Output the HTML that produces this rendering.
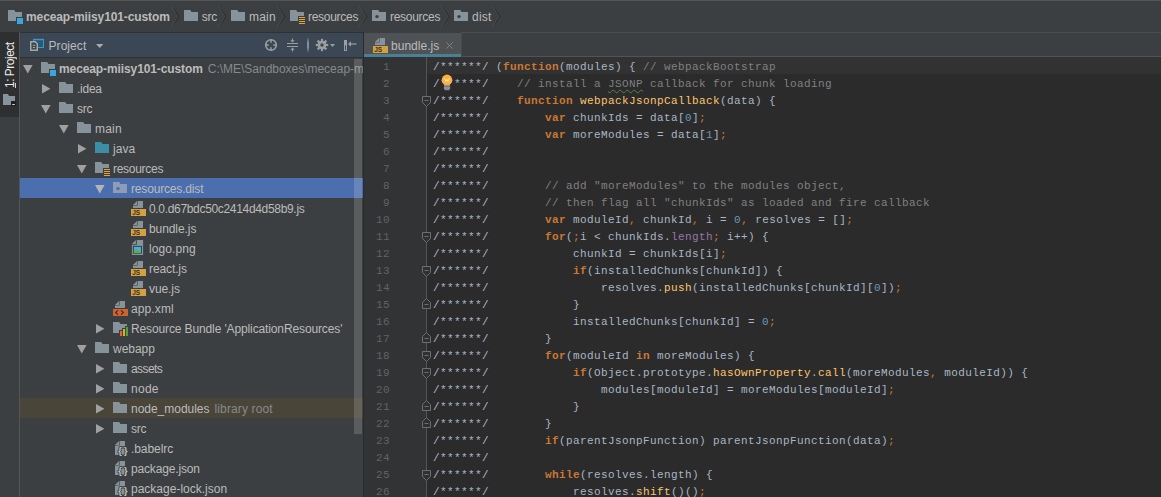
<!DOCTYPE html>
<html><head><meta charset="utf-8"><title>bundle.js</title>
<style>
*{box-sizing:border-box}
html,body{margin:0;padding:0}
body{width:1161px;height:497px;overflow:hidden;background:#3c3f41;position:relative;font-family:"Liberation Sans",sans-serif;font-size:12px;color:#bbbbbb}
.abs{position:absolute}
.ic{display:block}
.b{font-weight:bold}
#topline{left:0;top:0;width:1161px;height:1px;background:#555555}
#crumbs{left:0;top:1px;width:1161px;height:31px;background:#3c3f41;white-space:nowrap}
#crumbs .ct{top:1px;height:31px;line-height:31px;font-size:12px;color:#bbbbbb}
#crumbline{left:461px;top:32px;width:700px;height:1px;background:#4c4e50}
#strip{left:0;top:32px;width:20px;height:465px;background:#3c3f41;border-right:1px solid #555555}
#ptab{left:0;top:32px;width:19px;height:85px;background:#2d2f30}
#ptabtx{left:1px;top:40px;width:19px;height:48px;line-height:19px;writing-mode:vertical-rl;transform:rotate(180deg);font-size:12px;color:#ececec;white-space:nowrap;letter-spacing:-0.5px}
#phead{left:20px;top:32px;width:343px;height:26px;background:#3b4754;border-top:1px solid #2f3234;border-bottom:1px solid #2f3234}
#phead .t{position:absolute;left:28.5px;top:1px;line-height:24px;font-size:12px;color:#bbbbbb;letter-spacing:0.065px}
#tree{left:20px;top:58px;width:343px;height:439px;overflow:hidden;background:#3c3f41}
.row{position:absolute;left:0;width:343px;height:20px;line-height:20px;white-space:nowrap}
.row.sel{background:#4b6eaf}
.row.lib{background:#494539}
.row .icw{position:absolute;top:2px;width:16px;height:16px}
.row .tx{position:absolute;top:1px;font-size:12px;color:#bbbbbb}
.row .ex{color:#878a8c;margin-left:5px;font-weight:normal}
#tthumb{left:354px;top:59px;width:8px;height:375px;background:rgba(255,255,255,0.155)}
#divider{left:363px;top:32px;width:1px;height:465px;background:#2b2b2b}
#tabs{left:364px;top:33px;width:797px;height:24px;background:#3c3f41;border-bottom:1px solid #515355}
#tabsb{left:461px;top:33px;width:1px;height:24px;background:#47494b}
#tab{left:364px;top:33px;width:97px;height:24px;background:#4e5254;border-bottom:3px solid #4a8096}
#tab .t{position:absolute;left:27px;top:1px;line-height:24px;font-size:12px;color:#bbbbbb;letter-spacing:0.030px}
#editor{left:364px;top:57px;width:797px;height:440px;background:#2b2b2b;overflow:hidden}
#gutter{left:0;top:0;width:62px;height:440px;background:#313335}
#gline{left:62px;top:0;width:1px;height:440px;background:#555555}
#caret{left:63px;top:0;width:734px;height:17px;background:#323232}
.num{position:absolute;left:0;width:26px;margin-top:2px;text-align:right;height:17px;line-height:17px;font-family:"Liberation Mono",monospace;font-size:11px;letter-spacing:0.399px;color:#606366}
.ln{position:absolute;left:69px;height:17px;line-height:17px;margin-top:2px;white-space:pre;font-family:"Liberation Mono",monospace;font-size:11px;letter-spacing:0.399px;color:#a9b7c6}
.k{color:#cc7832} .kb{font-weight:bold} .f{color:#ffc66d} .n{color:#6897bb} .c{color:#808080} .p{color:#9876aa}
.ty{text-decoration:underline wavy #5d8048;text-decoration-thickness:1px;text-underline-offset:2px}
.fold{position:absolute;left:58px}
</style></head><body>
<div id="topline" class="abs"></div>
<div id="crumbs" class="abs"><span class="abs" style="left:7px;top:7px"><svg class="ic" width="16" height="16" viewBox="0 0 16 16"><path d="M1 2h6.2l1.3 2H15v5H9v4H1z" fill="#87939a"/><rect x="10" y="10" width="6" height="6" fill="#35a9dc"/></svg></span><span class="abs ct b" style="left:26px;letter-spacing:-0.103px">meceap-miisy101-custom</span><svg class="abs" style="left:170px;top:4px" width="10" height="23" viewBox="0 0 10 23"><defs><linearGradient id="cg7" x1="0" y1="0" x2="0" y2="1"><stop offset="0" stop-color="#2b2d2e" stop-opacity="0.1"/><stop offset="0.3" stop-color="#2b2d2e" stop-opacity="1"/><stop offset="0.7" stop-color="#2b2d2e" stop-opacity="1"/><stop offset="1" stop-color="#2b2d2e" stop-opacity="0.1"/></linearGradient></defs><path d="M1 1L8 11.5L1 22" fill="none" stroke="#55585a" stroke-opacity="0.6" stroke-width="1"/><path d="M2 1L9 11.5L2 22" fill="none" stroke="url(#cg7)" stroke-width="1.1"/></svg><span class="abs" style="left:183px;top:7px"><svg class="ic" width="16" height="16" viewBox="0 0 16 16"><path d="M1 2h6.2l1.3 2H15v9H1z" fill="#87939a"/></svg></span><span class="abs ct" style="left:201.8px;letter-spacing:-0.232px">src</span><svg class="abs" style="left:217px;top:4px" width="10" height="23" viewBox="0 0 10 23"><defs><linearGradient id="cg183" x1="0" y1="0" x2="0" y2="1"><stop offset="0" stop-color="#2b2d2e" stop-opacity="0.1"/><stop offset="0.3" stop-color="#2b2d2e" stop-opacity="1"/><stop offset="0.7" stop-color="#2b2d2e" stop-opacity="1"/><stop offset="1" stop-color="#2b2d2e" stop-opacity="0.1"/></linearGradient></defs><path d="M1 1L8 11.5L1 22" fill="none" stroke="#55585a" stroke-opacity="0.6" stroke-width="1"/><path d="M2 1L9 11.5L2 22" fill="none" stroke="url(#cg183)" stroke-width="1.1"/></svg><span class="abs" style="left:230px;top:7px"><svg class="ic" width="16" height="16" viewBox="0 0 16 16"><path d="M1 2h6.2l1.3 2H15v9H1z" fill="#87939a"/></svg></span><span class="abs ct" style="left:249px;letter-spacing:0.198px">main</span><svg class="abs" style="left:276px;top:4px" width="10" height="23" viewBox="0 0 10 23"><defs><linearGradient id="cg230" x1="0" y1="0" x2="0" y2="1"><stop offset="0" stop-color="#2b2d2e" stop-opacity="0.1"/><stop offset="0.3" stop-color="#2b2d2e" stop-opacity="1"/><stop offset="0.7" stop-color="#2b2d2e" stop-opacity="1"/><stop offset="1" stop-color="#2b2d2e" stop-opacity="0.1"/></linearGradient></defs><path d="M1 1L8 11.5L1 22" fill="none" stroke="#55585a" stroke-opacity="0.6" stroke-width="1"/><path d="M2 1L9 11.5L2 22" fill="none" stroke="url(#cg230)" stroke-width="1.1"/></svg><span class="abs" style="left:289px;top:7px"><svg class="ic" width="16" height="16" viewBox="0 0 16 16"><path d="M1 2h6.2l1.3 2H15v4H9v5H1z" fill="#87939a"/><g fill="#e0a53c"><rect x="10" y="9" width="6" height="1"/><rect x="10" y="11" width="6" height="1"/><rect x="10" y="13" width="6" height="1"/><rect x="10" y="15" width="6" height="1"/></g></svg></span><span class="abs ct" style="left:308px;letter-spacing:-0.288px">resources</span><svg class="abs" style="left:358px;top:4px" width="10" height="23" viewBox="0 0 10 23"><defs><linearGradient id="cg289" x1="0" y1="0" x2="0" y2="1"><stop offset="0" stop-color="#2b2d2e" stop-opacity="0.1"/><stop offset="0.3" stop-color="#2b2d2e" stop-opacity="1"/><stop offset="0.7" stop-color="#2b2d2e" stop-opacity="1"/><stop offset="1" stop-color="#2b2d2e" stop-opacity="0.1"/></linearGradient></defs><path d="M1 1L8 11.5L1 22" fill="none" stroke="#55585a" stroke-opacity="0.6" stroke-width="1"/><path d="M2 1L9 11.5L2 22" fill="none" stroke="url(#cg289)" stroke-width="1.1"/></svg><span class="abs" style="left:371px;top:7px"><svg class="ic" width="16" height="16" viewBox="0 0 16 16"><path d="M1 2h6.2l1.3 2H15v9H1z" fill="#87939a"/><circle cx="6" cy="8.6" r="1.7" fill="#3c3f41"/></svg></span><span class="abs ct" style="left:390px;letter-spacing:-0.288px">resources</span><svg class="abs" style="left:440px;top:4px" width="10" height="23" viewBox="0 0 10 23"><defs><linearGradient id="cg371" x1="0" y1="0" x2="0" y2="1"><stop offset="0" stop-color="#2b2d2e" stop-opacity="0.1"/><stop offset="0.3" stop-color="#2b2d2e" stop-opacity="1"/><stop offset="0.7" stop-color="#2b2d2e" stop-opacity="1"/><stop offset="1" stop-color="#2b2d2e" stop-opacity="0.1"/></linearGradient></defs><path d="M1 1L8 11.5L1 22" fill="none" stroke="#55585a" stroke-opacity="0.6" stroke-width="1"/><path d="M2 1L9 11.5L2 22" fill="none" stroke="url(#cg371)" stroke-width="1.1"/></svg><span class="abs" style="left:453px;top:7px"><svg class="ic" width="16" height="16" viewBox="0 0 16 16"><path d="M1 2h6.2l1.3 2H15v9H1z" fill="#87939a"/><circle cx="6" cy="8.6" r="1.7" fill="#3c3f41"/></svg></span><span class="abs ct" style="left:472px;letter-spacing:0.207px">dist</span><svg class="abs" style="left:491px;top:4px" width="10" height="23" viewBox="0 0 10 23"><defs><linearGradient id="cg453" x1="0" y1="0" x2="0" y2="1"><stop offset="0" stop-color="#2b2d2e" stop-opacity="0.1"/><stop offset="0.3" stop-color="#2b2d2e" stop-opacity="1"/><stop offset="0.7" stop-color="#2b2d2e" stop-opacity="1"/><stop offset="1" stop-color="#2b2d2e" stop-opacity="0.1"/></linearGradient></defs><path d="M1 1L8 11.5L1 22" fill="none" stroke="#55585a" stroke-opacity="0.6" stroke-width="1"/><path d="M2 1L9 11.5L2 22" fill="none" stroke="url(#cg453)" stroke-width="1.1"/></svg></div>
<div id="crumbline" class="abs"></div>
<div id="strip" class="abs"></div>
<div id="ptab" class="abs"></div>
<div id="ptabtx" class="abs">1: Project</div><div class="abs" style="left:15px;top:83px;width:1px;height:5px;background:#d0d0d0"></div>
<svg class="abs" style="left:3px;top:94px" width="13" height="12" viewBox="0 0 13 12"><path d="M0 0h5l1 2h6v5H8v4H0z" fill="#87939a"/><rect x="8" y="7.5" width="5" height="4.5" fill="#1e1f20"/><rect x="9.3" y="10" width="2.4" height="1" fill="#e0e0e0"/></svg>
<div id="phead" class="abs"><span class="t">Project</span></div>
<svg class="abs" style="left:29px;top:38px" width="16" height="14" viewBox="0 0 16 14"><rect x="4.5" y="1.5" width="10" height="8" fill="#2c5877" stroke="#3f96c4"/><rect x="4" y="0.8" width="11" height="1.4" fill="#3f96c4"/><path d="M1.75 3.75h4.5l2 2v6.5h-6.5z" fill="#3f4448" stroke="#a4a6a8" stroke-width="1.5"/><path d="M3.8 7.3h2.4M3.8 9.6h2.4" stroke="#a4a6a8" stroke-width="1"/></svg>
<svg class="abs" style="left:96px;top:44px" width="8" height="4" viewBox="0 0 8 4"><path d="M0 0h7.4L3.7 4z" fill="#a8abad"/></svg>

<svg class="abs" style="left:264px;top:38px" width="14" height="14" viewBox="0 0 14 14"><circle cx="7" cy="7" r="5.3" fill="none" stroke="#9b9ea1" stroke-width="1.6"/><path d="M7 1.5v3.2M7 9.3v3.2M1.5 7h3.2M9.3 7h3.2" stroke="#9b9ea1" stroke-width="1.5"/></svg>
<svg class="abs" style="left:286px;top:38px" width="13" height="14" viewBox="0 0 13 14"><path d="M1 5.5h11M1 8.5h11" stroke="#9b9ea1" stroke-width="1"/><path d="M6.5 0.5v3.5M6.5 13.5v-3.5" stroke="#9b9ea1" stroke-width="1"/><path d="M4.3 2.2l2.2 2.3l2.2-2.3zM4.3 11.8l2.2-2.3l2.2 2.3z" fill="#9b9ea1"/></svg>
<div class="abs" style="left:307px;top:37px;width:2px;height:16px;background:linear-gradient(to bottom,rgba(150,160,170,0),rgba(150,160,170,0.8) 35%,rgba(150,160,170,0.8) 65%,rgba(150,160,170,0))"></div>
<svg class="abs" style="left:315px;top:38px" width="14" height="14" viewBox="0 0 14 14"><g transform="translate(7,7)" fill="#9b9ea1"><circle r="4.2"/><g id="teeth"><rect x="-1.1" y="-6.2" width="2.2" height="12.4"/><rect x="-1.1" y="-6.2" width="2.2" height="12.4" transform="rotate(45)"/><rect x="-1.1" y="-6.2" width="2.2" height="12.4" transform="rotate(90)"/><rect x="-1.1" y="-6.2" width="2.2" height="12.4" transform="rotate(135)"/></g><circle r="1.7" fill="#3b4754"/></g></svg>
<svg class="abs" style="left:330px;top:44px" width="5" height="3" viewBox="0 0 5 3"><path d="M0 0h5L2.5 3z" fill="#9b9ea1"/></svg>
<svg class="abs" style="left:343px;top:39px" width="14" height="13" viewBox="0 0 14 13"><rect x="1.5" y="1.5" width="2" height="10" fill="none" stroke="#9b9ea1" stroke-width="1"/><rect x="1.5" y="1.5" width="2" height="5" fill="#9b9ea1"/><path d="M6 5h7.5" stroke="#9b9ea1" stroke-width="1.2"/><path d="M5 5l3-2.8v5.6z" fill="#9b9ea1"/></svg>

<div id="tree" class="abs">
<div class="row root" style="top:0px"><svg class="abs" style="left:3px;top:7px" width="10" height="9" viewBox="0 0 10 9"><path d="M0 0h9.6L4.8 8.4z" fill="#a0a0a0"/></svg><span class="icw" style="left:20px"><svg class="ic" width="16" height="16" viewBox="0 0 16 16"><path d="M1 2h6.2l1.3 2H15v5H9v4H1z" fill="#87939a"/><rect x="10" y="10" width="6" height="6" fill="#35a9dc"/></svg></span><span class="tx b" style="left:39px;letter-spacing:-0.103px">meceap-miisy101-custom<span class="ex" style="letter-spacing:-0.023px">C:\ME\Sandboxes\meceap-miisy101-custom</span></span></div>
<div class="row " style="top:20px"><svg class="abs" style="left:22px;top:6px" width="9" height="10" viewBox="0 0 9 10"><path d="M0 0v9.6L8.4 4.8z" fill="#a0a0a0"/></svg><span class="icw" style="left:38px"><svg class="ic" width="16" height="16" viewBox="0 0 16 16"><path d="M1 2h6.2l1.3 2H15v9H1z" fill="#87939a"/></svg></span><span class="tx" style="left:57px;letter-spacing:-0.244px">.idea</span></div>
<div class="row " style="top:40px"><svg class="abs" style="left:21px;top:7px" width="10" height="9" viewBox="0 0 10 9"><path d="M0 0h9.6L4.8 8.4z" fill="#a0a0a0"/></svg><span class="icw" style="left:38px"><svg class="ic" width="16" height="16" viewBox="0 0 16 16"><path d="M1 2h6.2l1.3 2H15v9H1z" fill="#87939a"/></svg></span><span class="tx" style="left:57px;letter-spacing:-0.232px">src</span></div>
<div class="row " style="top:60px"><svg class="abs" style="left:39px;top:7px" width="10" height="9" viewBox="0 0 10 9"><path d="M0 0h9.6L4.8 8.4z" fill="#a0a0a0"/></svg><span class="icw" style="left:56px"><svg class="ic" width="16" height="16" viewBox="0 0 16 16"><path d="M1 2h6.2l1.3 2H15v9H1z" fill="#87939a"/></svg></span><span class="tx" style="left:75px;letter-spacing:0.198px">main</span></div>
<div class="row " style="top:80px"><svg class="abs" style="left:58px;top:6px" width="9" height="10" viewBox="0 0 9 10"><path d="M0 0v9.6L8.4 4.8z" fill="#a0a0a0"/></svg><span class="icw" style="left:74px"><svg class="ic" width="16" height="16" viewBox="0 0 16 16"><path d="M1 2h6.2l1.3 2H15v9H1z" fill="#3a8ea8"/></svg></span><span class="tx" style="left:93px;letter-spacing:0.072px">java</span></div>
<div class="row " style="top:100px"><svg class="abs" style="left:57px;top:7px" width="10" height="9" viewBox="0 0 10 9"><path d="M0 0h9.6L4.8 8.4z" fill="#a0a0a0"/></svg><span class="icw" style="left:74px"><svg class="ic" width="16" height="16" viewBox="0 0 16 16"><path d="M1 2h6.2l1.3 2H15v4H9v5H1z" fill="#87939a"/><g fill="#e0a53c"><rect x="10" y="9" width="6" height="1"/><rect x="10" y="11" width="6" height="1"/><rect x="10" y="13" width="6" height="1"/><rect x="10" y="15" width="6" height="1"/></g></svg></span><span class="tx" style="left:93px;letter-spacing:-0.288px">resources</span></div>
<div class="row sel" style="top:120px"><svg class="abs" style="left:75px;top:7px" width="10" height="9" viewBox="0 0 10 9"><path d="M0 0h9.6L4.8 8.4z" fill="#b2b5ba"/></svg><span class="icw" style="left:92px"><svg class="ic" width="16" height="16" viewBox="0 0 16 16"><path d="M1 2h6.2l1.3 2H15v9H1z" fill="#8e9db5"/><circle cx="6" cy="8.6" r="1.7" fill="#4b6eaf"/></svg></span><span class="tx" style="left:111px;letter-spacing:-0.171px">resources.dist</span></div>
<div class="row " style="top:140px"><span class="icw" style="left:110px"><svg class="ic" width="16" height="16" viewBox="0 0 16 16"><path d="M7.6 1H13v7H3V5.6h4.6z" fill="#87939a"/><path d="M3 5L7 1v4z" fill="#87939a"/><rect x="1" y="9" width="15" height="7" fill="#d5a041"/><text x="2.2" y="15" font-family="Liberation Sans, sans-serif" font-size="6.5" font-weight="bold" fill="#3a3020">JS</text></svg></span><span class="tx" style="left:129px;letter-spacing:-0.324px">0.0.d67bdc50c2414d4d58b9.js</span></div>
<div class="row " style="top:160px"><span class="icw" style="left:110px"><svg class="ic" width="16" height="16" viewBox="0 0 16 16"><path d="M7.6 1H13v7H3V5.6h4.6z" fill="#87939a"/><path d="M3 5L7 1v4z" fill="#87939a"/><rect x="1" y="9" width="15" height="7" fill="#d5a041"/><text x="2.2" y="15" font-family="Liberation Sans, sans-serif" font-size="6.5" font-weight="bold" fill="#3a3020">JS</text></svg></span><span class="tx" style="left:129px;letter-spacing:-0.081px">bundle.js</span></div>
<div class="row " style="top:180px"><span class="icw" style="left:110px"><svg class="ic" width="16" height="16" viewBox="0 0 16 16"><path d="M6.8 0H13.1v15H1.9V4.8h4.9z" fill="#87939a"/><path d="M1.9 4L5.9 0v4z" fill="#87939a"/><rect x="2.9" y="5.9" width="9.1" height="7.7" fill="#35383a"/><rect x="3.8" y="6.8" width="7.3" height="6" fill="#3fb0e0"/><path d="M3.8 12.8v-2.2l2.2-1.6l2.1 0.9l3 2v0.9z" fill="#5fb043"/></svg></span><span class="tx" style="left:129px;letter-spacing:0.095px">logo.png</span></div>
<div class="row " style="top:200px"><span class="icw" style="left:110px"><svg class="ic" width="16" height="16" viewBox="0 0 16 16"><path d="M7.6 1H13v7H3V5.6h4.6z" fill="#87939a"/><path d="M3 5L7 1v4z" fill="#87939a"/><rect x="1" y="9" width="15" height="7" fill="#d5a041"/><text x="2.2" y="15" font-family="Liberation Sans, sans-serif" font-size="6.5" font-weight="bold" fill="#3a3020">JS</text></svg></span><span class="tx" style="left:129px;letter-spacing:-0.110px">react.js</span></div>
<div class="row " style="top:220px"><span class="icw" style="left:110px"><svg class="ic" width="16" height="16" viewBox="0 0 16 16"><path d="M7.6 1H13v7H3V5.6h4.6z" fill="#87939a"/><path d="M3 5L7 1v4z" fill="#87939a"/><rect x="1" y="9" width="15" height="7" fill="#d5a041"/><text x="2.2" y="15" font-family="Liberation Sans, sans-serif" font-size="6.5" font-weight="bold" fill="#3a3020">JS</text></svg></span><span class="tx" style="left:129px;letter-spacing:-0.091px">vue.js</span></div>
<div class="row " style="top:240px"><span class="icw" style="left:92px"><svg class="ic" width="16" height="16" viewBox="0 0 16 16"><path d="M7.6 1H13v7H3V5.6h4.6z" fill="#87939a"/><path d="M3 5L7 1v4z" fill="#87939a"/><rect x="1" y="9" width="15" height="7" fill="#cc6330"/><path d="M6 10.3L3.6 12.5L6 14.7M9 10.3l2.4 2.2L9 14.7" fill="none" stroke="#4a2412" stroke-width="1.05"/></svg></span><span class="tx" style="left:111px;letter-spacing:0.112px">app.xml</span></div>
<div class="row " style="top:260px"><svg class="abs" style="left:76px;top:6px" width="9" height="10" viewBox="0 0 9 10"><path d="M0 0v9.6L8.4 4.8z" fill="#a0a0a0"/></svg><span class="icw" style="left:92px"><svg class="ic" width="16" height="16" viewBox="0 0 16 16"><path d="M1 2h6.2l1.3 2H15v2h-2v2H10v2H7v3H1z" fill="#87939a"/><rect x="8" y="11" width="2.1" height="5" fill="#e8642a"/><rect x="11" y="9" width="2.1" height="7" fill="#e0a53c"/><rect x="14" y="7" width="2" height="9" fill="#4aa82e"/></svg></span><span class="tx" style="left:111px;letter-spacing:-0.124px">Resource Bundle &#x27;ApplicationResources&#x27;</span></div>
<div class="row " style="top:280px"><svg class="abs" style="left:57px;top:7px" width="10" height="9" viewBox="0 0 10 9"><path d="M0 0h9.6L4.8 8.4z" fill="#a0a0a0"/></svg><span class="icw" style="left:74px"><svg class="ic" width="16" height="16" viewBox="0 0 16 16"><path d="M1 2h6.2l1.3 2H15v9H1z" fill="#87939a"/></svg></span><span class="tx" style="left:93px;letter-spacing:-0.039px">webapp</span></div>
<div class="row " style="top:300px"><svg class="abs" style="left:76px;top:6px" width="9" height="10" viewBox="0 0 9 10"><path d="M0 0v9.6L8.4 4.8z" fill="#a0a0a0"/></svg><span class="icw" style="left:92px"><svg class="ic" width="16" height="16" viewBox="0 0 16 16"><path d="M1 2h6.2l1.3 2H15v9H1z" fill="#87939a"/></svg></span><span class="tx" style="left:111px;letter-spacing:-0.564px">assets</span></div>
<div class="row " style="top:320px"><svg class="abs" style="left:76px;top:6px" width="9" height="10" viewBox="0 0 9 10"><path d="M0 0v9.6L8.4 4.8z" fill="#a0a0a0"/></svg><span class="icw" style="left:92px"><svg class="ic" width="16" height="16" viewBox="0 0 16 16"><path d="M1 2h6.2l1.3 2H15v9H1z" fill="#87939a"/></svg></span><span class="tx" style="left:111px;letter-spacing:0.277px">node</span></div>
<div class="row lib" style="top:340px"><svg class="abs" style="left:76px;top:6px" width="9" height="10" viewBox="0 0 9 10"><path d="M0 0v9.6L8.4 4.8z" fill="#a0a0a0"/></svg><span class="icw" style="left:92px"><svg class="ic" width="16" height="16" viewBox="0 0 16 16"><path d="M1 2h6.2l1.3 2H15v9H1z" fill="#87939a"/></svg></span><span class="tx" style="left:111px;letter-spacing:-0.019px">node_modules<span class="ex" style="letter-spacing:0.135px">library root</span></span></div>
<div class="row " style="top:360px"><svg class="abs" style="left:76px;top:6px" width="9" height="10" viewBox="0 0 9 10"><path d="M0 0v9.6L8.4 4.8z" fill="#a0a0a0"/></svg><span class="icw" style="left:92px"><svg class="ic" width="16" height="16" viewBox="0 0 16 16"><path d="M1 2h6.2l1.3 2H15v9H1z" fill="#87939a"/></svg></span><span class="tx" style="left:111px;letter-spacing:-0.299px">src</span></div>
<div class="row " style="top:380px"><span class="icw" style="left:92px"><svg class="ic" width="16" height="16" viewBox="0 0 16 16"><path d="M7.6 1H13v14H3V5.6h4.6z" fill="#87939a"/><path d="M3 5L7 1v4z" fill="#87939a"/><text x="6.3" y="14.1" font-family="Liberation Sans, sans-serif" font-size="9" font-weight="bold" fill="#c4ccd2" stroke="#3c3f41" stroke-width="1.8" paint-order="stroke" letter-spacing="2.2">{}</text></svg></span><span class="tx" style="left:111px;letter-spacing:-0.074px">.babelrc</span></div>
<div class="row " style="top:400px"><span class="icw" style="left:92px"><svg class="ic" width="16" height="16" viewBox="0 0 16 16"><path d="M7.6 1H13v14H3V5.6h4.6z" fill="#87939a"/><path d="M3 5L7 1v4z" fill="#87939a"/><text x="6.3" y="14.1" font-family="Liberation Sans, sans-serif" font-size="9" font-weight="bold" fill="#c4ccd2" stroke="#3c3f41" stroke-width="1.8" paint-order="stroke" letter-spacing="2.2">{}</text></svg></span><span class="tx" style="left:111px;letter-spacing:-0.160px">package.json</span></div>
<div class="row " style="top:420px"><span class="icw" style="left:92px"><svg class="ic" width="16" height="16" viewBox="0 0 16 16"><path d="M7.6 1H13v14H3V5.6h4.6z" fill="#87939a"/><path d="M3 5L7 1v4z" fill="#87939a"/><text x="6.3" y="14.1" font-family="Liberation Sans, sans-serif" font-size="9" font-weight="bold" fill="#c4ccd2" stroke="#3c3f41" stroke-width="1.8" paint-order="stroke" letter-spacing="2.2">{}</text></svg></span><span class="tx" style="left:111px;letter-spacing:0.003px">package-lock.json</span></div>
</div>
<div id="tthumb" class="abs"></div>
<div id="divider" class="abs"></div>
<div id="tabs" class="abs"></div>
<div id="tabsb" class="abs"></div>
<div id="tab" class="abs"><span class="abs" style="left:8px;top:4px"><svg class="ic" width="16" height="16" viewBox="0 0 16 16"><path d="M7.6 1H13v7H3V5.6h4.6z" fill="#87939a"/><path d="M3 5L7 1v4z" fill="#87939a"/><rect x="1" y="9" width="15" height="7" fill="#d5a041"/><text x="2.2" y="15" font-family="Liberation Sans, sans-serif" font-size="6.5" font-weight="bold" fill="#3a3020">JS</text></svg></span><span class="t">bundle.js</span>
<svg class="abs" style="left:82px;top:9px" width="7" height="7" viewBox="0 0 7 7"><path d="M0.3 0.3l6.4 6.4M6.7 0.3l-6.4 6.4" stroke="#7d8183" stroke-width="1"/></svg></div>
<div id="editor" class="abs">
<div id="caret" class="abs"></div>
<div id="gutter" class="abs">
<div class="num" style="top:0px">1</div>
<div class="num" style="top:17px">2</div>
<div class="num" style="top:34px">3</div>
<div class="num" style="top:51px">4</div>
<div class="num" style="top:68px">5</div>
<div class="num" style="top:85px">6</div>
<div class="num" style="top:102px">7</div>
<div class="num" style="top:119px">8</div>
<div class="num" style="top:136px">9</div>
<div class="num" style="top:153px">10</div>
<div class="num" style="top:170px">11</div>
<div class="num" style="top:187px">12</div>
<div class="num" style="top:204px">13</div>
<div class="num" style="top:221px">14</div>
<div class="num" style="top:238px">15</div>
<div class="num" style="top:255px">16</div>
<div class="num" style="top:272px">17</div>
<div class="num" style="top:289px">18</div>
<div class="num" style="top:306px">19</div>
<div class="num" style="top:323px">20</div>
<div class="num" style="top:340px">21</div>
<div class="num" style="top:357px">22</div>
<div class="num" style="top:374px">23</div>
<div class="num" style="top:391px">24</div>
<div class="num" style="top:408px">25</div>
<div class="num" style="top:425px">26</div>
</div>
<div id="gline" class="abs"></div>
<svg class="fold" style="top:39px" width="9" height="11" viewBox="0 0 9 11"><path d="M0.5 0.5h8v6l-4 4l-4-4z" fill="#2e3032" stroke="#6c6f71"/><path d="M2.5 4.5h4" stroke="#6c6f71"/></svg><svg class="fold" style="top:175px" width="9" height="11" viewBox="0 0 9 11"><path d="M0.5 0.5h8v6l-4 4l-4-4z" fill="#2e3032" stroke="#6c6f71"/><path d="M2.5 4.5h4" stroke="#6c6f71"/></svg><svg class="fold" style="top:209px" width="9" height="11" viewBox="0 0 9 11"><path d="M0.5 0.5h8v6l-4 4l-4-4z" fill="#2e3032" stroke="#6c6f71"/><path d="M2.5 4.5h4" stroke="#6c6f71"/></svg><svg class="fold" style="top:294px" width="9" height="11" viewBox="0 0 9 11"><path d="M0.5 0.5h8v6l-4 4l-4-4z" fill="#2e3032" stroke="#6c6f71"/><path d="M2.5 4.5h4" stroke="#6c6f71"/></svg><svg class="fold" style="top:311px" width="9" height="11" viewBox="0 0 9 11"><path d="M0.5 0.5h8v6l-4 4l-4-4z" fill="#2e3032" stroke="#6c6f71"/><path d="M2.5 4.5h4" stroke="#6c6f71"/></svg><svg class="fold" style="top:413px" width="9" height="11" viewBox="0 0 9 11"><path d="M0.5 0.5h8v6l-4 4l-4-4z" fill="#2e3032" stroke="#6c6f71"/><path d="M2.5 4.5h4" stroke="#6c6f71"/></svg><svg class="fold" style="top:241px" width="9" height="11" viewBox="0 0 9 11"><path d="M0.5 10.5h8v-6l-4-4l-4 4z" fill="#2e3032" stroke="#6c6f71"/><path d="M2.5 6.5h4" stroke="#6c6f71"/></svg><svg class="fold" style="top:275px" width="9" height="11" viewBox="0 0 9 11"><path d="M0.5 10.5h8v-6l-4-4l-4 4z" fill="#2e3032" stroke="#6c6f71"/><path d="M2.5 6.5h4" stroke="#6c6f71"/></svg><svg class="fold" style="top:343px" width="9" height="11" viewBox="0 0 9 11"><path d="M0.5 10.5h8v-6l-4-4l-4 4z" fill="#2e3032" stroke="#6c6f71"/><path d="M2.5 6.5h4" stroke="#6c6f71"/></svg><svg class="fold" style="top:360px" width="9" height="11" viewBox="0 0 9 11"><path d="M0.5 10.5h8v-6l-4-4l-4 4z" fill="#2e3032" stroke="#6c6f71"/><path d="M2.5 6.5h4" stroke="#6c6f71"/></svg>
<div class="ln" style="top:0px">/******/ (<span class="k kb">function</span>(modules) { <span class="c">// webpackBootstrap</span></div>
<div class="ln" style="top:17px">/******/    <span class="c">// install a <span class="ty">JSONP</span> callback for chunk loading</span></div>
<div class="ln" style="top:34px">/******/    <span class="k kb">function</span> <span class="f">webpackJsonpCallback</span>(data) {</div>
<div class="ln" style="top:51px">/******/        <span class="k kb">var</span> chunkIds = data[<span class="n">0</span>]<span class="k">;</span></div>
<div class="ln" style="top:68px">/******/        <span class="k kb">var</span> moreModules = data[<span class="n">1</span>]<span class="k">;</span></div>
<div class="ln" style="top:85px">/******/</div>
<div class="ln" style="top:102px">/******/</div>
<div class="ln" style="top:119px">/******/        <span class="c">// add &quot;moreModules&quot; to the modules object,</span></div>
<div class="ln" style="top:136px">/******/        <span class="c">// then flag all &quot;chunkIds&quot; as loaded and fire callback</span></div>
<div class="ln" style="top:153px">/******/        <span class="k kb">var</span> moduleId<span class="k">,</span> chunkId<span class="k">,</span> i = <span class="n">0</span><span class="k">,</span> resolves = []<span class="k">;</span></div>
<div class="ln" style="top:170px">/******/        <span class="k kb">for</span>(<span class="k">;</span>i &lt; chunkIds.<span class="p">length</span><span class="k">;</span> i++) {</div>
<div class="ln" style="top:187px">/******/            chunkId = chunkIds[i]<span class="k">;</span></div>
<div class="ln" style="top:204px">/******/            <span class="k kb">if</span>(installedChunks[chunkId]) {</div>
<div class="ln" style="top:221px">/******/                resolves.<span class="f">push</span>(installedChunks[chunkId][<span class="n">0</span>])<span class="k">;</span></div>
<div class="ln" style="top:238px">/******/            }</div>
<div class="ln" style="top:255px">/******/            installedChunks[chunkId] = <span class="n">0</span><span class="k">;</span></div>
<div class="ln" style="top:272px">/******/        }</div>
<div class="ln" style="top:289px">/******/        <span class="k kb">for</span>(moduleId <span class="k kb">in</span> moreModules) {</div>
<div class="ln" style="top:306px">/******/            <span class="k kb">if</span>(Object.prototype.<span class="f">hasOwnProperty</span>.<span class="f">call</span>(moreModules<span class="k">,</span> moduleId)) {</div>
<div class="ln" style="top:323px">/******/                modules[moduleId] = moreModules[moduleId]<span class="k">;</span></div>
<div class="ln" style="top:340px">/******/            }</div>
<div class="ln" style="top:357px">/******/        }</div>
<div class="ln" style="top:374px">/******/        <span class="k kb">if</span>(parentJsonpFunction) parentJsonpFunction(data)<span class="k">;</span></div>
<div class="ln" style="top:391px">/******/</div>
<div class="ln" style="top:408px">/******/        <span class="k kb">while</span>(resolves.length) {</div>
<div class="ln" style="top:425px">/******/            resolves.<span class="f">shift</span>()()<span class="k">;</span></div>
<svg class="abs" style="left:77px;top:17px" width="12" height="17" viewBox="0 0 12 17"><circle cx="6" cy="5.9" r="5.3" fill="#f8b145"/><path d="M2.3 8.6h7.4L8.6 11.2H3.4z" fill="#f8b145"/><path d="M3.6 4.2l1.4 3.2l1-2l1 2l1.4-3.2" fill="none" stroke="#fde6a8" stroke-width="0.9"/><rect x="2.9" y="11.1" width="6.2" height="1.2" fill="#8b9197"/><rect x="2.9" y="12.5" width="6.2" height="1.3" fill="#a6abb0"/><rect x="2.9" y="14" width="6.2" height="1.2" fill="#8b9197"/><rect x="3.6" y="15.3" width="4.8" height="0.9" fill="#a6abb0"/></svg>
</div>
</body></html>
